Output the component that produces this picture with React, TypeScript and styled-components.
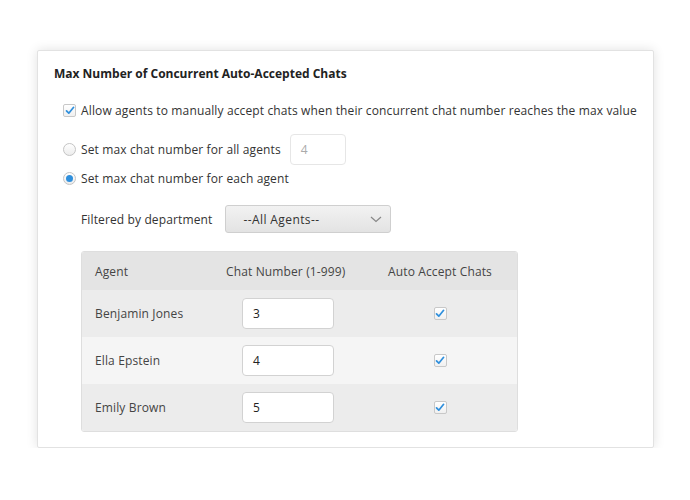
import React from "react";
import styled, { createGlobalStyle } from "styled-components";

const Global = createGlobalStyle`
  html, body { margin: 0; padding: 0; background: #fff; }
  body { font-family: "Open Sans", "Liberation Sans", sans-serif; font-size: 12px; color: #333; letter-spacing: 0.13px; }
`;

const Page = styled.div`
  padding: 50px 36px 0 37px;
  width: 690px;
  box-sizing: border-box;
`;

const Card = styled.div`
  width: 617px;
  height: 398px;
  box-sizing: border-box;
  background: #fff;
  border: 1px solid #e2e2e2;
  border-radius: 2px;
  box-shadow: 0 0 12px rgba(0, 0, 0, 0.12);
  padding: 15px 0 0 16px;
`;

const Title = styled.div`
  font-weight: 700;
  font-size: 12px;
  color: #222;
  line-height: 16px;
  letter-spacing: 0;
`;

const Options = styled.div`
  margin-top: 19px;
  padding-left: 9px;
  display: flex;
  flex-direction: column;
`;

const Row = styled.label<{ $h: number; $mt?: number }>`
  display: flex;
  align-items: center;
  gap: 5px;
  height: ${(p) => p.$h}px;
  margin-top: ${(p) => p.$mt ?? 0}px;
`;

const Box = styled.span`
  width: 13px;
  height: 13px;
  box-sizing: border-box;
  border: 1px solid #c8c8c8;
  border-radius: 2px;
  background: linear-gradient(#fff, #f0f0f0);
  display: inline-flex;
  align-items: center;
  justify-content: center;
  flex: none;
`;

const Radio = styled.span<{ $on?: boolean }>`
  width: 13px;
  height: 13px;
  box-sizing: border-box;
  border: 1px solid #c4c4c4;
  border-radius: 50%;
  background: linear-gradient(#fff, #ececec);
  display: inline-flex;
  align-items: center;
  justify-content: center;
  flex: none;
  &::after {
    content: "";
    display: ${(p) => (p.$on ? "block" : "none")};
    width: 7px;
    height: 7px;
    border-radius: 50%;
    background: #2f8fdc;
  }
`;

const SmallInput = styled.div<{ $muted?: boolean; $w: number; $h: number; $ml?: number }>`
  width: ${(p) => p.$w}px;
  height: ${(p) => p.$h}px;
  margin-left: ${(p) => p.$ml ?? 0}px;
  box-sizing: border-box;
  border: 1px solid ${(p) => (p.$muted ? "#e6e6e6" : "#d2d2d2")};
  border-radius: 4px;
  background: #fff;
  color: ${(p) => (p.$muted ? "#aaa" : "#222")};
  display: flex;
  align-items: center;
  padding-left: 10px;
`;

const FilterRow = styled.div`
  display: flex;
  align-items: center;
  margin-top: 17px;
  padding-left: 27px;
  gap: 13px;
`;

const Select = styled.div`
  width: 166px;
  height: 28px;
  box-sizing: border-box;
  border: 1px solid #cfcfcf;
  border-radius: 3px;
  background: linear-gradient(#f2f2f2, #e3e3e3);
  display: flex;
  align-items: center;
  justify-content: space-between;
  padding: 0 8px 0 17px;
  color: #333;
  letter-spacing: 0.4px;
`;

const Table = styled.div`
  margin: 18px 0 0 27px;
  width: 435px;
  border: 1px solid #dedede;
  border-radius: 3px;
  overflow: hidden;
`;

const TRow = styled.div<{ $bg: string; $h: number }>`
  display: grid;
  grid-template-columns: 130px 172px 1fr;
  align-items: center;
  height: ${(p) => p.$h}px;
  background: ${(p) => p.$bg};
`;

const Cell = styled.div<{ $center?: boolean; $pl?: number }>`
  display: flex;
  justify-content: ${(p) => (p.$center ? "center" : "flex-start")};
  padding-left: ${(p) => p.$pl ?? 0}px;
  padding-right: ${(p) => (p.$center ? 21 : 0)}px;
  color: #444;
`;

const Check = () => (
  <Box>
    <svg width="10" height="9" viewBox="0 0 10 9">
      <path d="M1.5 4.8 L3.8 7.2 L8.6 1.3" fill="none" stroke="#2f8fdc" strokeWidth="1.7" strokeLinecap="round" strokeLinejoin="round" />
    </svg>
  </Box>
);

const agents = [
  { name: "Benjamin Jones", n: "3", bg: "#ececec" },
  { name: "Ella Epstein", n: "4", bg: "#f5f5f5" },
  { name: "Emily Brown", n: "5", bg: "#ececec" },
];

export default function App() {
  return (
    <>
      <Global />
      <Page>
        <Card>
          <Title>Max Number of Concurrent Auto-Accepted Chats</Title>
          <Options>
            <Row $h={18}>
              <Check />
              <span>Allow agents to manually accept chats when their concurrent chat number reaches the max value</span>
            </Row>
            <Row $h={30} $mt={15}>
              <Radio />
              <span>Set max chat number for all agents</span>
              <SmallInput $muted $w={56} $h={31} $ml={4}>4</SmallInput>
            </Row>
            <Row $h={20} $mt={4}>
              <Radio $on />
              <span>Set max chat number for each agent</span>
            </Row>
          </Options>
          <FilterRow>
            <span>Filtered by department</span>
            <Select>
              <span>--All Agents--</span>
              <svg width="12" height="7" viewBox="0 0 12 7">
                <path d="M1 1 L6 5.5 L11 1" fill="none" stroke="#888" strokeWidth="1.2" />
              </svg>
            </Select>
          </FilterRow>
          <Table>
            <TRow $bg="#e4e4e4" $h={38}>
              <Cell $pl={13}>Agent</Cell>
              <Cell $pl={14}>Chat Number (1-999)</Cell>
              <Cell $center>Auto Accept Chats</Cell>
            </TRow>
            {agents.map((a) => (
              <TRow key={a.name} $bg={a.bg} $h={47}>
                <Cell $pl={13}>{a.name}</Cell>
                <Cell $pl={30}>
                  <SmallInput $w={92} $h={31}>{a.n}</SmallInput>
                </Cell>
                <Cell $center>
                  <Check />
                </Cell>
              </TRow>
            ))}
          </Table>
        </Card>
      </Page>
    </>
  );
}
